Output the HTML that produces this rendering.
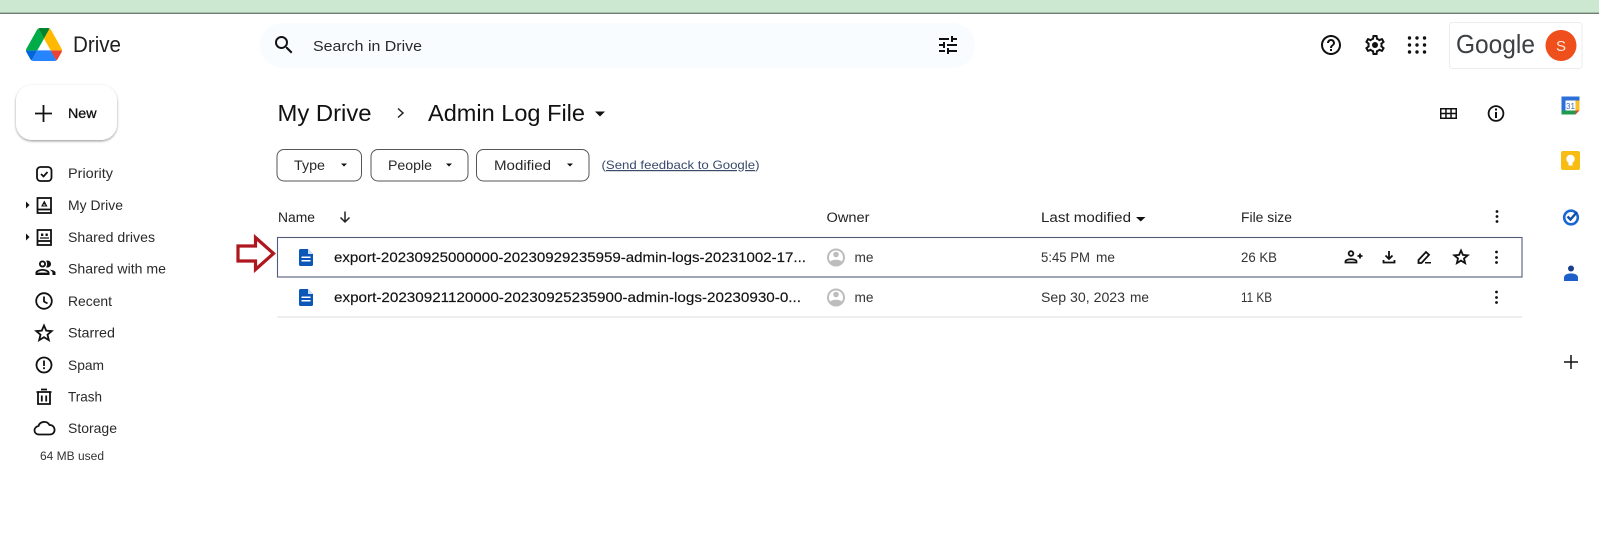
<!DOCTYPE html>
<html><head><meta charset="utf-8"><title>Drive</title>
<style>
html,body{margin:0;padding:0;background:#fff;width:1599px;height:540px;overflow:hidden}
svg{display:block}
text{font-family:"Liberation Sans",sans-serif;fill:#1f1f1f}
.n{font-size:14px;fill:#2a2a2a}
.m{font-size:14px;fill:#111;stroke:#111;stroke-width:.15}
.r{font-size:13.5px;fill:#333}
.ic{fill:#111}
.ln{fill:none;stroke:#111;stroke-width:1.8}
</style></head><body>
<svg width="1599" height="540" viewBox="0 0 1599 540" xmlns="http://www.w3.org/2000/svg">
<defs>
<filter id="sh" x="-20%" y="-20%" width="140%" height="150%"><feDropShadow dx="0" dy="1.2" stdDeviation="1.2" flood-color="#000" flood-opacity=".4"/></filter>
</defs>
<rect width="1599" height="540" fill="#fff"/>
<rect width="1599" height="13" fill="#cde8d0"/>
<rect y="12.6" width="1599" height="1.4" fill="#6f7f74"/>

<!-- logo -->
<g transform="translate(26 28) scale(.4124 .423)">
<path d="m6.6 66.85 3.85 6.65c.8 1.4 1.95 2.5 3.3 3.3l13.75-23.8h-27.5c0 1.55.4 3.1 1.2 4.5z" fill="#0066da"/>
<path d="m43.65 25-13.75-23.8c-1.35.8-2.5 1.9-3.3 3.3l-25.4 44a9.06 9.06 0 0 0 -1.2 4.5h27.5z" fill="#00ac47"/>
<path d="m73.55 76.8c1.35-.8 2.5-1.9 3.3-3.3l1.6-2.75 7.65-13.25c.8-1.4 1.2-2.95 1.2-4.5h-27.502l5.852 11.5z" fill="#ea4335"/>
<path d="m43.65 25 13.75-23.8c-1.35-.8-2.9-1.2-4.5-1.2h-18.5c-1.6 0-3.15.45-4.5 1.2z" fill="#00832d"/>
<path d="m59.8 53h-32.3l-13.75 23.8c1.35.8 2.9 1.2 4.5 1.2h50.8c1.6 0 3.15-.45 4.5-1.2z" fill="#2684fc"/>
<path d="m73.4 26.5-12.7-22c-.8-1.4-1.95-2.5-3.3-3.3l-13.75 23.8 16.15 28h27.45c0-1.55-.4-3.1-1.2-4.5z" fill="#ffba00"/>
</g>
<text x="73" y="52" font-size="22" textLength="48" lengthAdjust="spacingAndGlyphs">Drive</text>

<!-- New -->
<rect x="16" y="85" width="101" height="55" rx="16" fill="#fff" filter="url(#sh)"/>
<path d="M43.5 105v17M35 113.500h17" stroke="#111" stroke-width="1.8" fill="none"/>
<text x="68" y="118" font-size="13.500" textLength="28.500" lengthAdjust="spacingAndGlyphs" style="fill:#111;stroke:#111;stroke-width:.3">New</text>

<!-- Sidebar text -->
<text class="n" x="68" y="178" textLength="45" lengthAdjust="spacingAndGlyphs">Priority</text>
<text class="n" x="68" y="210" textLength="55" lengthAdjust="spacingAndGlyphs">My Drive</text>
<text class="n" x="68" y="242" textLength="87" lengthAdjust="spacingAndGlyphs">Shared drives</text>
<text class="n" x="68" y="273.500" textLength="98" lengthAdjust="spacingAndGlyphs">Shared with me</text>
<text class="n" x="68" y="306" textLength="44" lengthAdjust="spacingAndGlyphs">Recent</text>
<text class="n" x="68" y="337.500" textLength="47" lengthAdjust="spacingAndGlyphs">Starred</text>
<text class="n" x="68" y="370" textLength="36" lengthAdjust="spacingAndGlyphs">Spam</text>
<text class="n" x="68" y="401.500" textLength="34" lengthAdjust="spacingAndGlyphs">Trash</text>
<text class="n" x="68" y="433" textLength="49" lengthAdjust="spacingAndGlyphs">Storage</text>
<text x="40" y="460" font-size="11.500" textLength="64" lengthAdjust="spacingAndGlyphs" style="fill:#333">64 MB used</text>

<!-- Sidebar icons -->
<rect x="37" y="167" width="14.500" height="14" rx="3.500" class="ln"/>
<path d="M41 174l2.500 2.500 4-4.500" class="ln" stroke-width="1.500"/>
<path d="M26 201.500l3.500 3.500-3.500 3.500z" class="ic"/>
<path d="M26 233.500l3.500 3.500-3.500 3.500z" class="ic"/>
<rect x="37.500" y="198" width="13.500" height="15" class="ln"/><path d="M37.500 209.500h13.500" class="ln"/>
<path d="M44.300 200.500l3.200 6h-6.400z" class="ic"/><path d="M43.300 204.500h2v1h-2z" fill="#fff"/>
<rect x="37.500" y="230" width="13.500" height="15" class="ln"/><path d="M37.500 241h13.500" class="ln"/>
<path d="M41 233.500h2.300v2.500h-2.300zM45.500 233.500h2.300v2.500h-2.300zM40 237.400h9v1.200h-9z" class="ic"/>
<g transform="translate(33.500 257)"><path d="M9 12c-2.300 0-7 1.200-7 3.500V18h14v-2.500C16 13.200 11.300 12 9 12zm0-1.500c1.900 0 3.500-1.600 3.500-3.500S10.900 3.500 9 3.500 5.500 5.100 5.500 7s1.600 3.500 3.500 3.500zm0-5.200c.9 0 1.700.8 1.700 1.700S9.900 8.700 9 8.700 7.300 7.900 7.300 7 8.100 5.300 9 5.300zm0 8.500c2 0 4.700 1 5.200 1.800H3.800c.5-.8 3.200-1.800 5.200-1.800zM16 12.600c1.200.8 3 2 3 3.400v2h3v-2.500c0-1.800-3.500-2.600-6-2.900zM14 10.500c1.900 0 3.500-1.600 3.500-3.500S15.900 3.500 14 3.500c-.5 0-1 .1-1.400.3.600.9 1 2 1 3.200s-.4 2.300-1 3.200c.4.200.9.300 1.400.3z" class="ic"/></g>
<circle cx="44" cy="301" r="7.800" class="ln"/><path d="M44 296.500v5l3.500 2" class="ln" stroke-width="1.500"/>
<path d="M44 325.500l2.200 5.100 5.500.5-4.200 3.600 1.300 5.400-4.800-2.900-4.800 2.900 1.300-5.400-4.200-3.600 5.500-.5z" class="ln" stroke-width="1.500"/>
<circle cx="44" cy="365" r="7.500" class="ln"/><path d="M43.100 360.500h1.800v5.500h-1.800zM43.100 367.300h1.800v1.800h-1.800z" class="ic"/>
<path d="M38 392.500v11.500h12v-11.500M36.500 392h15M41 389.500h6M41.800 395.500v6M46.200 395.500v6" class="ln" stroke-width="1.600"/>
<path d="M39.500 434.500c-6.500 0-6.500-7.500-1-8.500 1.500-5 8.500-5.500 11-1 6-.5 7.500 9.500 0 9.500z" class="ln" stroke-width="1.700"/>

<!-- Search -->
<rect x="260" y="23" width="715" height="45" rx="22.500" fill="#f8fcff"/>
<path transform="translate(272 33)" d="M15.500 14h-.79l-.28-.27A6.471 6.471 0 0 0 16 9.500 6.500 6.500 0 1 0 9.500 16c1.610 0 3.090-.59 4.230-1.570l.27.28v.79l5 4.990L20.490 19l-4.990-5zm-6 0C7.010 14 5 11.990 5 9.500S7.010 5 9.500 5 14 7.010 14 9.500 11.990 14 9.500 14z" class="ic"/>
<text x="313" y="51" font-size="15" textLength="109" lengthAdjust="spacingAndGlyphs" style="fill:#2a2a2a">Search in Drive</text>
<path transform="translate(936 33)" d="M3 17v2h6v-2H3zM3 5v2h10V5H3zm10 16v-2h8v-2h-8v-2h-2v6h2zM7 9v2H3v2h4v2h2V9H7zm14 4v-2H11v2h10zm-6-4h2V7h4V5h-4V3h-2v6z" class="ic"/>

<!-- Top right -->
<path transform="translate(1319 33)" d="M11 18h2v-2h-2v2zm1-16C6.480 2 2 6.480 2 12s4.480 10 10 10 10-4.480 10-10S17.520 2 12 2zm0 18c-4.410 0-8-3.590-8-8s3.590-8 8-8 8 3.590 8 8-3.590 8-8 8zm0-14c-2.210 0-4 1.790-4 4h2c0-1.100.9-2 2-2s2 .9 2 2c0 2-3 1.750-3 5h2c0-2.250 3-2.500 3-5 0-2.210-1.790-4-4-4z" class="ic"/>
<path transform="translate(1363 33)" d="M19.430 12.980c.04-.32.07-.64.07-.98 0-.34-.03-.66-.07-.98l2.110-1.650c.19-.15.24-.42.12-.64l-2-3.460c-.09-.16-.26-.25-.44-.25-.06 0-.12.01-.17.03l-2.490 1c-.52-.4-1.080-.73-1.690-.98l-.38-2.650C14.460 2.180 14.250 2 14 2h-4c-.25 0-.46.18-.49.42l-.38 2.650c-.61.25-1.170.59-1.690.98l-2.490-1c-.06-.02-.12-.03-.18-.03-.17 0-.34.09-.43.25l-2 3.460c-.13.22-.07.49.12.64l2.110 1.650c-.04.32-.07.65-.07.98 0 .33.03.66.07.98l-2.110 1.650c-.19.15-.24.42-.12.64l2 3.460c.09.16.26.25.44.25.06 0 .12-.01.17-.03l2.490-1c.52.4 1.080.73 1.690.98l.38 2.650c.03.24.24.42.49.42h4c.25 0 .46-.18.49-.42l.38-2.650c.61-.25 1.170-.59 1.690-.98l2.490 1c.06.02.12.03.18.03.17 0 .34-.09.43-.25l2-3.460c.12-.22.07-.49-.12-.64l-2.110-1.650zm-1.980-1.710c.04.31.05.52.05.73 0 .21-.02.43-.05.73l-.14 1.130.89.7 1.080.84-.7 1.210-1.270-.51-1.040-.42-.9.68c-.43.32-.84.56-1.250.73l-1.060.43-.16 1.130-.2 1.350h-1.400l-.19-1.350-.16-1.130-1.060-.43c-.43-.18-.83-.41-1.230-.71l-.91-.7-1.060.43-1.270.51-.7-1.210 1.080-.84.89-.7-.14-1.130c-.03-.31-.05-.54-.05-.74s.02-.43.05-.73l.14-1.130-.89-.7-1.080-.84.7-1.210 1.270.51 1.040.42.9-.68c.43-.32.84-.56 1.250-.73l1.060-.43.16-1.130.2-1.350h1.390l.19 1.350.16 1.130 1.060.43c.43.18.83.41 1.230.71l.91.7 1.060-.43 1.270-.51.7 1.210-1.070.85-.89.7.14 1.130z" class="ic"/>
<circle cx="1375" cy="45" r="3" class="ic"/>
<g class="ic"><circle cx="1409.500" cy="38" r="1.700"/><circle cx="1417" cy="38" r="1.700"/><circle cx="1424.500" cy="38" r="1.700"/><circle cx="1409.500" cy="45" r="1.700"/><circle cx="1417" cy="45" r="1.700"/><circle cx="1424.500" cy="45" r="1.700"/><circle cx="1409.500" cy="52" r="1.700"/><circle cx="1417" cy="52" r="1.700"/><circle cx="1424.500" cy="52" r="1.700"/></g>
<rect x="1449.500" y="22.500" width="132.500" height="46" rx="3" fill="#fff" stroke="#ececec"/>
<text x="1456" y="53" font-size="26" textLength="79" lengthAdjust="spacingAndGlyphs" style="fill:#3c4043">Google</text>
<circle cx="1561" cy="45.500" r="15.500" fill="#ee4f1b"/>
<text x="1561" y="51" font-size="15" text-anchor="middle" style="fill:#ffe9dc">S</text>

<!-- Breadcrumb -->
<text x="277.500" y="121" font-size="23.500" textLength="94" lengthAdjust="spacingAndGlyphs" style="fill:#111">My Drive</text>
<path d="M398 108.500l5 4.500-5 4.500" fill="none" stroke="#222" stroke-width="1.500"/>
<text x="428" y="121" font-size="23.500" textLength="157" lengthAdjust="spacingAndGlyphs" style="fill:#111">Admin Log File</text>
<path d="M595 111.500h10l-5 5z" class="ic"/>
<g class="ic" transform="translate(1440 108)"><path d="M0 0h17v11H0zM1.500 1.500v3.200h3.700V1.500zm5.200 0v3.200h3.600V1.500zm5.100 0v3.200h3.700V1.500zM1.500 6.200v3.300h3.700V6.200zm5.200 0v3.300h3.600V6.200zm5.100 0v3.300h3.700V6.200z" fill-rule="evenodd"/></g>
<circle cx="1496" cy="113.500" r="7.400" class="ln"/><path d="M1495 112h2v6h-2zM1495 108.500h2v2h-2z" class="ic"/>

<!-- Filters -->
<g fill="#fff" stroke="#555" stroke-width="1">
<rect x="277" y="149.500" width="84.500" height="31.500" rx="7"/>
<rect x="371" y="149.500" width="97" height="31.500" rx="7"/>
<rect x="476.500" y="149.500" width="112.500" height="31.500" rx="7"/>
</g>
<text class="n" x="294" y="170" textLength="31" lengthAdjust="spacingAndGlyphs">Type</text>
<text class="n" x="388" y="170" textLength="44" lengthAdjust="spacingAndGlyphs">People</text>
<text class="n" x="494" y="170" textLength="57" lengthAdjust="spacingAndGlyphs">Modified</text>
<path d="M341 163.500h6l-3 3zM446 163.500h6l-3 3zM567 163.500h6l-3 3z" class="ic"/>
<text x="601.500" y="169" font-size="12" textLength="158" lengthAdjust="spacingAndGlyphs" style="fill:#3a4a6b">(<tspan text-decoration="underline">Send feedback to Google</tspan>)</text>

<!-- Table header -->
<text class="r" x="278" y="222" textLength="37" lengthAdjust="spacingAndGlyphs" style="fill:#222">Name</text>
<path d="M345 211.500v10M340.500 217.500l4.500 4.500 4.500-4.500" fill="none" stroke="#222" stroke-width="1.500"/>
<text class="r" x="826.500" y="222" textLength="43" lengthAdjust="spacingAndGlyphs" style="fill:#222">Owner</text>
<text class="r" x="1041" y="222" textLength="90" lengthAdjust="spacingAndGlyphs" style="fill:#222">Last modified</text>
<path d="M1136 217h9.500l-4.750 4.500z" class="ic"/>
<text class="r" x="1241" y="222" textLength="51" lengthAdjust="spacingAndGlyphs" style="fill:#222">File size</text>
<g class="ic"><circle cx="1497" cy="211.500" r="1.400"/><circle cx="1497" cy="216.500" r="1.400"/><circle cx="1497" cy="221.500" r="1.400"/></g>

<!-- Rows -->
<rect x="277.500" y="237.500" width="1244.500" height="39.500" fill="#fff" stroke="#525c78" stroke-width="1.100"/>
<rect x="277" y="316.300" width="1245" height="1.300" fill="#e6e6e6"/>

<path d="M300.500 249h7.500l5 5v10.500a1.500 1.500 0 0 1-1.500 1.500h-11a1.500 1.500 0 0 1-1.500-1.500v-14a1.500 1.500 0 0 1 1.500-1.500z" fill="#0b57b8"/><path d="M308 249v5h5z" fill="#cfe0f6"/><path d="M301.500 256.500h9v1.500h-9zM301.500 260h9v1.500h-9z" fill="#fff"/>
<path d="M300.500 289h7.500l5 5v10.500a1.500 1.500 0 0 1-1.500 1.500h-11a1.500 1.500 0 0 1-1.500-1.500v-14a1.500 1.500 0 0 1 1.500-1.500z" fill="#0b57b8"/><path d="M308 289v5h5z" fill="#cfe0f6"/><path d="M301.500 296.500h9v1.500h-9zM301.500 300h9v1.500h-9z" fill="#fff"/>

<text class="m" x="334" y="262" textLength="472" lengthAdjust="spacingAndGlyphs">export-20230925000000-20230929235959-admin-logs-20231002-17...</text>
<text class="m" x="334" y="302" textLength="467" lengthAdjust="spacingAndGlyphs">export-20230921120000-20230925235900-admin-logs-20230930-0...</text>

<!-- owner avatars -->
<g fill="none" stroke="#bdbdbd" stroke-width="2">
<circle cx="836" cy="257.500" r="8"/><circle cx="836" cy="297.500" r="8"/>
</g>
<g fill="#bdbdbd">
<circle cx="836" cy="254.500" r="2.800"/><path d="M830 262c1-3 11-3 12 0l-2.500 2.500h-7z"/>
<circle cx="836" cy="294.500" r="2.800"/><path d="M830 302c1-3 11-3 12 0l-2.500 2.500h-7z"/>
</g>
<text class="r" x="854.500" y="262" textLength="19" lengthAdjust="spacingAndGlyphs">me</text>
<text class="r" x="854.500" y="302" textLength="19" lengthAdjust="spacingAndGlyphs">me</text>
<text class="r" x="1041" y="262" textLength="49" lengthAdjust="spacingAndGlyphs">5:45 PM</text>
<text class="r" x="1096" y="262" textLength="19" lengthAdjust="spacingAndGlyphs">me</text>
<text class="r" x="1041" y="302" textLength="84" lengthAdjust="spacingAndGlyphs">Sep 30, 2023</text>
<text class="r" x="1130" y="302" textLength="19" lengthAdjust="spacingAndGlyphs">me</text>
<text class="r" x="1241" y="262" textLength="36" lengthAdjust="spacingAndGlyphs">26 KB</text>
<text class="r" x="1241" y="302" textLength="31" lengthAdjust="spacingAndGlyphs">11 KB</text>

<!-- Row actions -->
<circle cx="1351" cy="253.500" r="2.300" class="ln" stroke-width="1.400"/>
<path d="M1345.500 262.500v-1c0-3 11-3 11 0v1z" class="ln" stroke-width="1.400"/>
<path d="M1357.500 256h5M1360 253.500v5" class="ln" stroke-width="1.200"/>
<path d="M1389 251v8M1385.500 255.500l3.500 3.500 3.500-3.500M1383.500 260v2.500h11V260" class="ln" stroke-width="1.600"/>
<path d="M1418.500 263v-3l7.500-8 3 2.800-7.500 8.200z" class="ln" stroke-width="1.400"/><path d="M1425 262h6v1.500h-6z" class="ic"/>
<path d="M1461 250.500l1.900 4.400 4.800.4-3.700 3.100 1.100 4.700-4.100-2.500-4.100 2.500 1.100-4.700-3.700-3.100 4.800-.4z" class="ln" stroke-width="1.300"/>
<g class="ic"><circle cx="1496.500" cy="252" r="1.400"/><circle cx="1496.500" cy="257.500" r="1.400"/><circle cx="1496.500" cy="262.500" r="1.400"/>
<circle cx="1496.500" cy="292" r="1.400"/><circle cx="1496.500" cy="297.500" r="1.400"/><circle cx="1496.500" cy="302.500" r="1.400"/></g>

<!-- Red arrow -->
<path d="M238 246h17.500v-8.500l18 16-18 16V261H238z" fill="#fff" stroke="#ad171d" stroke-width="3.200"/>

<!-- Right rail -->
<rect x="1561.500" y="96.500" width="18" height="18" fill="#fff"/>
<path d="M1561.500 96.500h4v18h-4z" fill="#2d6fd8"/><path d="M1561.500 96.500h18v4h-18z" fill="#2d6fd8"/>
<path d="M1575.500 100.500h4v10h-4z" fill="#f6c026"/><path d="M1561.500 110.500h14v4h-14z" fill="#1f9a50"/>
<path d="M1575.500 110.500h4l-4 4z" fill="#d8443a"/>
<text x="1570.500" y="109" font-size="8" text-anchor="middle" style="fill:#3b6fb8">31</text>
<rect x="1561" y="151" width="19" height="19" rx="2" fill="#f8bd15"/>
<circle cx="1570.500" cy="159" r="4.200" fill="#fff"/><rect x="1568.500" y="162.500" width="4" height="3" fill="#fff"/>
<circle cx="1571" cy="217.500" r="6.800" fill="none" stroke="#1967d2" stroke-width="2.600"/>
<path d="M1567.500 216.500l3 3 6.500-7.500" fill="none" stroke="#0f4fa8" stroke-width="2.400"/>
<circle cx="1571" cy="268.500" r="3" fill="#1a3f8a"/>
<path d="M1564 281v-3.500c0-5.500 14-5.500 14 0v3.500z" fill="#1f5fc9"/>
<path d="M1571 355v14M1564 362h14" stroke="#111" stroke-width="1.500" fill="none"/>
</svg>
</body></html>
